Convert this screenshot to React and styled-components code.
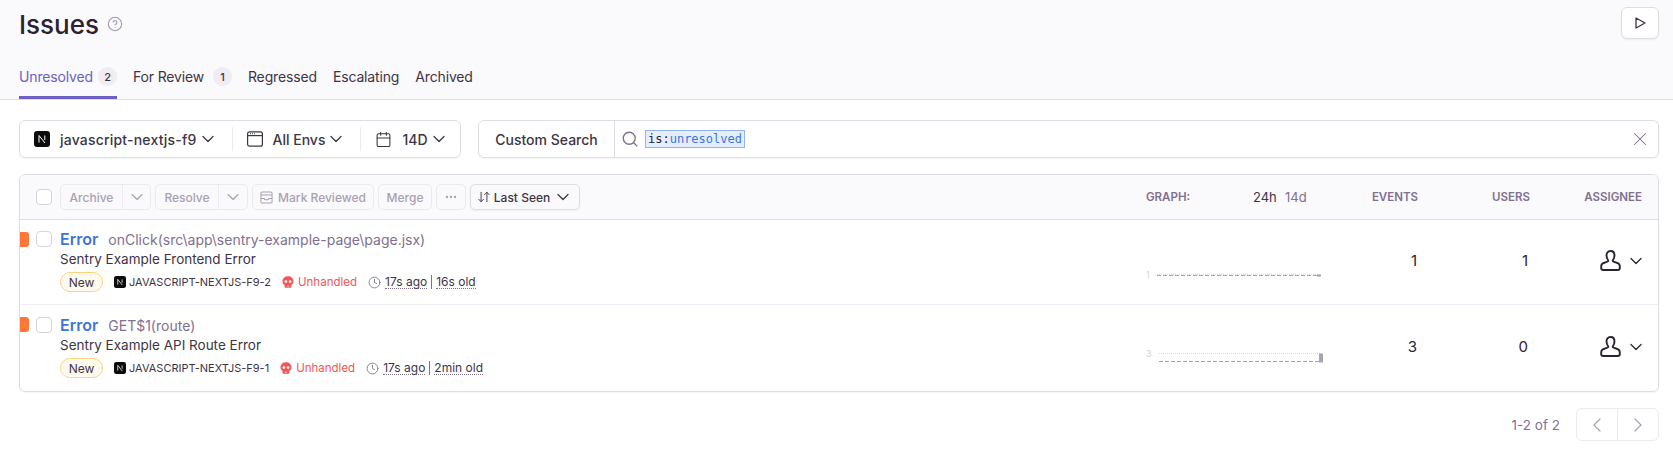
import React from "react";
import styled, { createGlobalStyle } from "styled-components";
import { ChevronDown, ChevronLeft, ChevronRight, Search, X, Calendar, ArrowDownUp, Ellipsis, Clock, CircleHelp } from "lucide-react";

const GlobalStyle = createGlobalStyle`
  body {
    margin: 0;
    background: #fff;
    color: #2b2233;
    font-family: Inter, "Noto Sans", sans-serif;
  }
`;

const NextLogo = ({ size = 16 }) => (
  <svg width={size} height={size} viewBox="0 0 16 16">
    <rect width="16" height="16" rx="3" fill="#0b0b0b" />
    <path d="M5 11.5V4.5L11 12M10.8 4.5V9" fill="none" stroke="#fff" strokeWidth="1" />
  </svg>
);

const WindowIcon = () => (
  <svg width="16" height="16" viewBox="0 0 16 16" fill="none" stroke="#3e3446" strokeWidth="1.2">
    <rect x="0.6" y="0.8" width="14.8" height="14.4" rx="2" />
    <path d="M0.6 4.6H15.4" />
    <path d="M3 2.7H3.8M5 2.7H5.8M7 2.7H7.8" />
  </svg>
);

const ReviewIcon = () => (
  <svg width="13" height="13" viewBox="0 0 14 14" fill="none" stroke="#a9a1b4" strokeWidth="1.1">
    <rect x="1" y="1" width="12" height="12" rx="1.5" />
    <path d="M1 4.2H13M1 8H4.5C4.5 10 9.5 10 9.5 8H13" />
  </svg>
);

const PlayIcon = () => (
  <svg width="11" height="12" viewBox="0 0 11 12" fill="none" stroke="#3e3446" strokeWidth="1.3" strokeLinejoin="round">
    <path d="M1 1V11L10 6Z" />
  </svg>
);

const SkullIcon = () => (
  <svg width="12" height="12" viewBox="0 0 12 12">
    <path
      fillRule="evenodd"
      fill="#f55459"
      d="M6 0.2C2.8 0.2 0.5 2.3 0.5 5.2C0.5 6.9 1.3 8.2 2.6 9V10.8C2.6 11.4 3 11.8 3.6 11.8H8.4C9 11.8 9.4 11.4 9.4 10.8V9C10.7 8.2 11.5 6.9 11.5 5.2C11.5 2.3 9.2 0.2 6 0.2ZM3.9 4.2A1.4 1.4 0 1 1 3.9 7A1.4 1.4 0 1 1 3.9 4.2ZM8.1 4.2A1.4 1.4 0 1 1 8.1 7A1.4 1.4 0 1 1 8.1 4.2ZM5.4 9.4H6.6V10.8H5.4Z"
    />
  </svg>
);

const UserIcon = () => (
  <svg width="21" height="21" viewBox="0 0 21 21" fill="none" stroke="#2b2233" strokeWidth="1.9" strokeLinejoin="round">
    <path d="M10.5 1C7.8 1 6.5 3 6.5 5.5C6.5 8 7.5 9.5 8.3 10.5C8.3 11.5 7 12 5 12.5C2.5 13 1.2 14.5 1.2 16.5V18C1.2 19.2 2 20 3.2 20H17.8C19 20 19.8 19.2 19.8 18V16.5C19.8 14.5 18.5 13 16 12.5C14 12 12.7 11.5 12.7 10.5C13.5 9.5 14.5 8 14.5 5.5C14.5 3 13.2 1 10.5 1Z" />
  </svg>
);

const Graph = ({ label, top, bottom, barTop }) => (
  <GraphBox>
    <GraphLabel $top={top}>{label}</GraphLabel>
    <svg width="165" height="14" viewBox="0 0 165 14">
      <path d={`M0 ${top}H164`} stroke="#dcd7e2" strokeWidth="1" strokeDasharray="1 1" />
      <path d={`M0 ${bottom}H160`} stroke="#a8a2b0" strokeWidth="1" strokeDasharray="4 2" />
      <rect x="160" y={barTop} width="4" height={bottom - barTop + 1} fill="#a9a2b6" />
    </svg>
  </GraphBox>
);

const ISSUES = [
  {
    id: "JAVASCRIPT-NEXTJS-F9-2",
    where: "onClick(src\\app\\sentry-example-page\\page.jsx)",
    message: "Sentry Example Frontend Error",
    age: "16s old",
    events: 1,
    users: 1,
    graph: { label: 1, top: 9.5, bottom: 10.5, barTop: 9.5 },
  },
  {
    id: "JAVASCRIPT-NEXTJS-F9-1",
    where: "GET$1(route)",
    message: "Sentry Example API Route Error",
    age: "2min old",
    events: 3,
    users: 0,
    graph: { label: 3, top: 2.5, bottom: 10.5, barTop: 2.5 },
  },
];

export default function App() {
  return (
    <>
      <GlobalStyle />
      <Header>
        <TitleRow>
          <TitleGroup>
            <Title>Issues</Title>
            <CircleHelp size={16} color="#9f97aa" strokeWidth={1.6} />
          </TitleGroup>
          <RunButton>
            <PlayIcon />
          </RunButton>
        </TitleRow>
        <Tabs>
          <Tab $active>
            Unresolved <Badge>2</Badge>
          </Tab>
          <Tab $min={99}>
            For Review <Badge>1</Badge>
          </Tab>
          <Tab>Regressed</Tab>
          <Tab>Escalating</Tab>
          <Tab>Archived</Tab>
        </Tabs>
      </Header>

      <Main>
        <Filters>
          <FilterGroup>
            <FilterItem>
              <NextLogo />
              <FilterText $wide>javascript-nextjs-f9</FilterText>
              <ChevronDown size={20} color="#3e3446" strokeWidth={1.5} />
            </FilterItem>
            <FilterItem $divided>
              <WindowIcon />
              <FilterText>All Envs</FilterText>
              <ChevronDown size={20} color="#3e3446" strokeWidth={1.5} />
            </FilterItem>
            <FilterItem $divided>
              <Calendar size={17} color="#3e3446" strokeWidth={1.5} />
              <FilterText>14D</FilterText>
              <ChevronDown size={20} color="#3e3446" strokeWidth={1.5} />
            </FilterItem>
          </FilterGroup>
          <SearchBar>
            <SearchLabel>Custom Search</SearchLabel>
            <SearchField>
              <Search size={18} color="#80708f" strokeWidth={1.8} />
              <Token>
                is:<TokenValue>unresolved</TokenValue>
              </Token>
              <Clear>
                <X size={22} color="#80708f" strokeWidth={1.1} />
              </Clear>
            </SearchField>
          </SearchBar>
        </Filters>

        <Panel>
          <PanelHead>
            <Checkbox />
            <Toolbar>
              <Split>
                <Part $w={61}>Archive</Part>
                <Part $w={28} $divided>
                  <ChevronDown size={20} strokeWidth={1.4} />
                </Part>
              </Split>
              <Split>
                <Part $w={62}>Resolve</Part>
                <Part $w={29} $divided>
                  <ChevronDown size={20} strokeWidth={1.4} />
                </Part>
              </Split>
              <Split>
                <Part $w={120}>
                  <ReviewIcon />
                  Mark Reviewed
                </Part>
              </Split>
              <Split>
                <Part $w={52}>Merge</Part>
              </Split>
              <Split>
                <Part $w={28}>
                  <Ellipsis size={14} />
                </Part>
              </Split>
              <SortButton>
                <ArrowDownUp size={14} strokeWidth={1.6} />
                Last Seen
                <ChevronDown size={20} strokeWidth={1.5} />
              </SortButton>
            </Toolbar>
            <HeadLabel $w={107}>Graph:</HeadLabel>
            <Range $w={32}>24h</Range>
            <Range $w={22} $muted>14d</Range>
            <HeadLabel $w={111} $right>Events</HeadLabel>
            <HeadLabel $w={112} $right>Users</HeadLabel>
            <HeadLabel $w={112} $right>Assignee</HeadLabel>
          </PanelHead>

          {ISSUES.map((issue) => (
            <Row key={issue.id}>
              <Marker />
              <Checkbox />
              <RowBody>
                <RowTitle>
                  <ErrorLink>Error</ErrorLink>
                  <Where>{issue.where}</Where>
                </RowTitle>
                <Message>{issue.message}</Message>
                <Meta>
                  <NewPill>New</NewPill>
                  <ShortId>
                    <NextLogo size={12} />
                    {issue.id}
                  </ShortId>
                  <Unhandled>
                    <SkullIcon />
                    Unhandled
                  </Unhandled>
                  <Times>
                    <Clock size={13} color="#80708f" strokeWidth={1.6} />
                    <Dotted>17s ago</Dotted>
                    <Pipe />
                    <Dotted>{issue.age}</Dotted>
                  </Times>
                </Meta>
              </RowBody>
              <GraphCell>
                <Graph {...issue.graph} />
              </GraphCell>
              <Count $w={85}>{issue.events}</Count>
              <Count $w={111}>{issue.users}</Count>
              <Assignee>
                <UserIcon />
                <ChevronDown size={20} color="#2b2233" strokeWidth={1.5} />
              </Assignee>
            </Row>
          ))}
        </Panel>

        <Pagination>
          <PageText>1-2 of 2</PageText>
          <PageButtons>
            <PageButton>
              <ChevronLeft size={24} strokeWidth={1.2} />
            </PageButton>
            <PageButton $divided>
              <ChevronRight size={24} strokeWidth={1.2} />
            </PageButton>
          </PageButtons>
        </Pagination>
      </Main>
    </>
  );
}

const Header = styled.header`
  background: #faf9fb;
  border-bottom: 1px solid #e0dce5;
  box-sizing: border-box;
  height: 100px;
  padding: 7px 14px 0 19px;
`;

const TitleRow = styled.div`
  align-items: flex-start;
  display: flex;
  height: 52px;
  justify-content: space-between;
`;

const TitleGroup = styled.div`
  align-items: center;
  display: flex;
  gap: 8px;
  height: 34px;
`;

const Title = styled.h1`
  color: #2b2233;
  font-size: 26px;
  font-weight: 500;
  margin: 0;
`;

const RunButton = styled.button`
  align-items: center;
  background: #fff;
  border: 1px solid #e0dce5;
  border-radius: 6px;
  box-shadow: 0 1px 2px rgba(43, 34, 51, 0.06);
  display: flex;
  height: 32px;
  justify-content: center;
  padding: 0;
  width: 38px;
`;

const Tabs = styled.nav`
  display: flex;
  gap: 16px;
  height: 40px;
`;

const Tab = styled.div`
  align-items: center;
  border-bottom: 3px solid ${(p) => (p.$active ? "#6c5fc7" : "transparent")};
  box-sizing: border-box;
  color: ${(p) => (p.$active ? "#6c5fc7" : "#3e3446")};
  display: flex;
  font-size: 14px;
  gap: 5px;
  height: 40px;
  justify-content: space-between;
  letter-spacing: -0.15px;
  min-width: ${(p) => p.$min || 0}px;
  padding-bottom: 2px;
`;

const Badge = styled.span`
  align-items: center;
  background: #f0ecf3;
  border-radius: 10px;
  color: #3e3446;
  display: flex;
  font-size: 11px;
  font-weight: 500;
  height: 19px;
  justify-content: center;
  width: 19px;
`;

const Main = styled.main`
  padding: 20px 14px 0 19px;
`;

const Filters = styled.div`
  display: flex;
  gap: 17px;
`;

const FilterGroup = styled.div`
  align-items: center;
  border: 1px solid #e0dce5;
  border-radius: 6px;
  box-shadow: 0 1px 2px rgba(43, 34, 51, 0.05);
  box-sizing: border-box;
  display: flex;
  flex: none;
  height: 38px;
  width: 442px;
`;

const FilterItem = styled.div`
  align-items: center;
  border-left: ${(p) => (p.$divided ? "1px solid #ece9ef" : "none")};
  display: flex;
  flex: none;
  gap: 6px;
  height: 24px;
  padding: 0 14px;
`;

const FilterText = styled.span`
  color: #3e3446;
  font-size: 14px;
  font-weight: 500;
  letter-spacing: ${(p) => (p.$wide ? "0.2px" : "0")};
  margin: 0 -5px 0 4px;
  white-space: nowrap;
`;

const SearchBar = styled.div`
  border: 1px solid #e0dce5;
  border-radius: 6px;
  box-shadow: 0 1px 2px rgba(43, 34, 51, 0.05);
  box-sizing: border-box;
  display: flex;
  flex: 1;
  height: 38px;
`;

const SearchLabel = styled.div`
  align-items: center;
  border-right: 1px solid #e0dce5;
  color: #3e3446;
  display: flex;
  font-size: 14px;
  font-weight: 500;
  justify-content: center;
  width: 135px;
`;

const SearchField = styled.div`
  align-items: center;
  display: flex;
  flex: 1;
  gap: 6px;
  padding: 0 7px 0 6px;
`;

const Token = styled.span`
  background: #e4eeff;
  border: 1px solid #90b4f0;
  color: #2b2233;
  font-family: "DejaVu Sans Mono", monospace;
  font-size: 12px;
  line-height: 16px;
  padding: 0 2px;
`;

const TokenValue = styled.span`
  color: #3c74dd;
`;

const Clear = styled.span`
  display: flex;
  margin-left: auto;
`;

const Panel = styled.section`
  border: 1px solid #e0dce5;
  border-radius: 6px;
  box-shadow: 0 1px 2px rgba(43, 34, 51, 0.04);
  margin-top: 16px;
  overflow: hidden;
`;

const PanelHead = styled.div`
  align-items: center;
  background: #faf9fb;
  border-bottom: 1px solid #e0dce5;
  box-sizing: border-box;
  display: flex;
  height: 45px;
  padding: 0 16px 0 16px;
`;

const Checkbox = styled.span`
  background: #fff;
  border: 1px solid #d6d1dc;
  border-radius: 4px;
  box-sizing: border-box;
  display: block;
  flex: none;
  height: 16px;
  width: 16px;
`;

const Toolbar = styled.div`
  align-items: center;
  display: flex;
  flex: 1;
  gap: 4px;
  margin-left: 8px;
`;

const Split = styled.div`
  border: 1px solid #ece9ef;
  border-radius: 5px;
  color: #a9a1b4;
  display: flex;
  font-size: 12px;
  font-weight: 500;
  height: 24px;
`;

const Part = styled.div`
  align-items: center;
  border-left: ${(p) => (p.$divided ? "1px solid #ece9ef" : "none")};
  box-sizing: border-box;
  display: flex;
  gap: 5px;
  justify-content: center;
  width: ${(p) => p.$w}px;
`;

const SortButton = styled.div`
  align-items: center;
  border: 1px solid #e0dce5;
  border-radius: 5px;
  box-shadow: 0 1px 2px rgba(43, 34, 51, 0.06);
  box-sizing: border-box;
  color: #3e3446;
  display: flex;
  font-size: 12px;
  font-weight: 500;
  gap: 3px;
  height: 26px;
  justify-content: center;
  width: 110px;
`;

const HeadLabel = styled.div`
  color: #80708f;
  font-size: 11.5px;
  font-weight: 600;
  text-align: ${(p) => (p.$right ? "right" : "left")};
  text-transform: uppercase;
  width: ${(p) => p.$w}px;
`;

const Range = styled.div`
  color: ${(p) => (p.$muted ? "#80708f" : "#3e3446")};
  font-size: 13px;
  width: ${(p) => p.$w}px;
`;

const Row = styled.div`
  align-items: flex-start;
  border-top: 1px solid #f0ecf3;
  box-sizing: border-box;
  display: flex;
  height: 87px;
  padding: 12px 12px 0 16px;
  position: relative;

  &:nth-child(2) {
    border-top: none;
    height: 84px;
    padding-top: 11px;
  }
`;

const Marker = styled.span`
  background: #ff7738;
  border-radius: 0 3px 3px 0;
  height: 15px;
  left: 0;
  position: absolute;
  top: 12px;
  width: 9px;
`;

const RowBody = styled.div`
  display: flex;
  flex: 1;
  flex-direction: column;
  margin-left: 8px;
  margin-top: -1px;
`;

const RowTitle = styled.div`
  align-items: baseline;
  display: flex;
  gap: 10px;
  height: 20px;
  margin-top: -1px;
`;

const ErrorLink = styled.span`
  color: #3d74db;
  font-size: 16px;
  font-weight: 600;
`;

const Where = styled.span`
  color: #80708f;
  font-size: 14px;
`;

const Message = styled.div`
  color: #3e3446;
  font-size: 13.5px;
  height: 20px;
  line-height: 20px;
`;

const Meta = styled.div`
  align-items: center;
  display: flex;
  font-size: 11.5px;
  height: 20px;
  margin-top: 3px;
`;

const NewPill = styled.span`
  align-items: center;
  background: #fffaf0;
  border: 1px solid #f9d57b;
  border-radius: 10px;
  box-sizing: border-box;
  color: #3e3446;
  display: flex;
  font-size: 12px;
  height: 20px;
  justify-content: center;
  margin-right: 11px;
  width: 43px;
`;

const ShortId = styled.span`
  align-items: center;
  color: #3e3446;
  display: flex;
  font-size: 11px;
  gap: 3px;
  margin-right: 11px;
`;

const Unhandled = styled.span`
  align-items: center;
  color: #f55459;
  display: flex;
  gap: 4px;
  margin-right: 11px;
`;

const Times = styled.span`
  align-items: center;
  color: #3e3446;
  display: flex;
  font-size: 12px;
  gap: 4px;
`;

const Dotted = styled.span`
  border-bottom: 1px dotted #80708f;
  line-height: 13px;
`;

const Pipe = styled.span`
  background: #80708f;
  display: block;
  height: 14px;
  width: 1px;
`;

const GraphCell = styled.div`
  padding-top: 34px;
  width: 186px;
`;

const GraphBox = styled.div`
  align-items: flex-start;
  display: flex;
  gap: 7px;
`;

const GraphLabel = styled.span`
  color: #d6d1dc;
  font-size: 9px;
  line-height: 10px;
  margin-top: ${(p) => p.$top - 5}px;
`;

const Count = styled.div`
  color: #2b2233;
  font-size: 15px;
  line-height: 20px;
  padding-top: 20px;
  text-align: right;
  width: ${(p) => p.$w}px;
`;

const Assignee = styled.div`
  align-items: center;
  display: flex;
  gap: 5px;
  margin-left: 72px;
  padding-top: 19px;
`;

const Pagination = styled.div`
  align-items: center;
  display: flex;
  gap: 16px;
  justify-content: flex-end;
  margin-top: 16px;
`;

const PageText = styled.span`
  color: #80708f;
  font-size: 13.5px;
`;

const PageButtons = styled.div`
  border: 1px solid #ece9ef;
  border-radius: 6px;
  display: flex;
  height: 31px;
`;

const PageButton = styled.div`
  align-items: center;
  border-left: ${(p) => (p.$divided ? "1px solid #ece9ef" : "none")};
  color: #a9a1b4;
  display: flex;
  justify-content: center;
  width: 40px;
`;
